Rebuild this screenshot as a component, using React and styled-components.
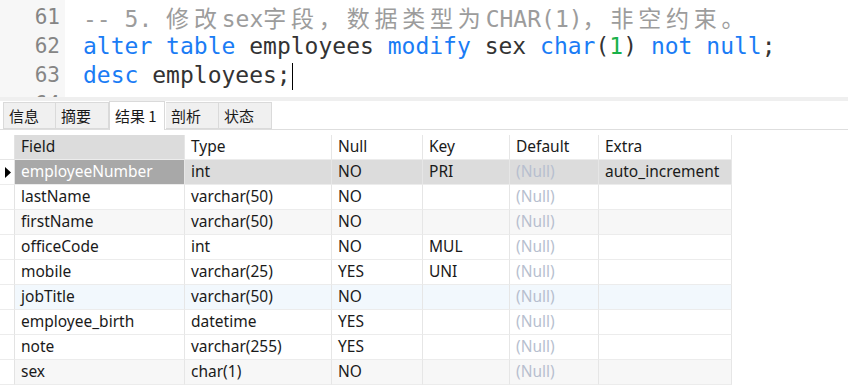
import React from "react";
import styled, { createGlobalStyle } from "styled-components";

const Global = createGlobalStyle`
  html, body { margin: 0; padding: 0; background: #ffffff; overflow: hidden; }
  #root { width: 848px; height: 385px; overflow: hidden; }
`;

const Page = styled.div`
  width: 848px;
  height: 385px;
  display: flex;
  flex-direction: column;
  background: #fff;
`;

/* ---------- Editor ---------- */
const Editor = styled.div`
  height: 97px;
  flex: none;
  display: grid;
  grid-template-columns: 65px 1fr;
  overflow: hidden;
`;

const Gutter = styled.div`
  background: #f7f7f7;
  padding-top: 3px;
  padding-right: 5px;
  text-align: right;
`;

const LineNo = styled.div`
  height: 29px;
  line-height: 29px;
  font-family: "DejaVu Sans Mono", "Liberation Mono", monospace;
  font-size: 21px;
  color: #858585;
`;

const CodeArea = styled.div`
  padding-top: 3px;
  padding-left: 18px;
`;

const CodeLine = styled.div`
  height: 29px;
  line-height: 29px;
  white-space: pre;
  font-family: "DejaVu Sans Mono", "Liberation Mono", "Noto Sans CJK SC", monospace;
  font-size: 23px;
  color: #333;
`;

const Tok = styled.span`
  color: ${(p) =>
    p.$k === "kw" ? "#1a7cf5" : p.$k === "cm" ? "#9c9c9c" : p.$k === "num" ? "#19b14a" : "#333333"};
`;

const Cjk = styled.span`
  font-family: "Noto Sans CJK SC", sans-serif;
  font-size: 23px;
  letter-spacing: 4.8px;
  color: #9c9c9c;
`;

const Caret = styled.span`
  display: inline-block;
  width: 1px;
  height: 27px;
  background: #000;
  vertical-align: middle;
  margin-left: 1px;
`;

/* ---------- Tabs ---------- */
const TabBar = styled.div`
  flex: none;
  height: 28px;
  border-top: 4px solid #efefef;
  border-bottom: 1px solid #dedede;
  display: flex;
  align-items: flex-end;
  padding-left: 3px;
  box-sizing: content-box;
`;

const Tab = styled.div`
  box-sizing: border-box;
  width: ${(p) => p.$w}px;
  height: ${(p) => (p.$active ? 29 : 27)}px;
  margin-bottom: ${(p) => (p.$active ? -1 : 0)}px;
  margin-right: ${(p) => (p.$gap ? 1 : 0)}px;
  background: ${(p) => (p.$active ? "#ffffff" : "#f0f0f0")};
  border: 1px solid #dadada;
  border-bottom: ${(p) => (p.$active ? "none" : "1px solid #dadada")};
  border-left: ${(p) => (p.$noLeft ? "none" : "1px solid #dadada")};
  padding-left: 5px;
  font-family: "Noto Sans CJK SC", "Noto Sans", sans-serif;
  font-size: 15px;
  line-height: ${(p) => (p.$active ? 27 : 25)}px;
  color: #1a1a1a;
  white-space: nowrap;
`;

/* ---------- Table ---------- */
const TableWrap = styled.div`
  margin-top: 5px;
  width: 732px;
`;

const Row = styled.div`
  display: grid;
  grid-template-columns: 15px 170px 147px 91px 87px 89px 133px;
  height: 25px;
  background: ${(p) => p.$bg || "#ffffff"};
`;

const Cell = styled.div`
  box-sizing: border-box;
  height: 25px;
  border-right: 1px solid #e6e6e6;
  border-bottom: 1px solid #ececec;
  padding-left: 6px;
  font-family: "Noto Sans", "Open Sans", sans-serif;
  font-size: 15.5px;
  line-height: 23px;
  white-space: nowrap;
  overflow: hidden;
  color: ${(p) => (p.$null ? "#b7bfcf" : p.$sel ? "#ffffff" : "#1a1a1a")};
  background: ${(p) => p.$bg || "transparent"};
`;

const Indicator = styled.div`
  box-sizing: border-box;
  height: 25px;
  border-right: 1px solid #e3e3e3;
  border-bottom: 1px solid #ececec;
  background: #fff;
  display: flex;
  align-items: center;
  padding-left: 5px;
`;

const HeadIndicator = styled(Indicator)`
  border-bottom: 1px solid #e6e6e6;
`;

const columns = ["Field", "Type", "Null", "Key", "Default", "Extra"];

const rows = [
  ["employeeNumber", "int", "NO", "PRI", null, "auto_increment"],
  ["lastName", "varchar(50)", "NO", "", null, ""],
  ["firstName", "varchar(50)", "NO", "", null, ""],
  ["officeCode", "int", "NO", "MUL", null, ""],
  ["mobile", "varchar(25)", "YES", "UNI", null, ""],
  ["jobTitle", "varchar(50)", "NO", "", null, ""],
  ["employee_birth", "datetime", "YES", "", null, ""],
  ["note", "varchar(255)", "YES", "", null, ""],
  ["sex", "char(1)", "NO", "", null, ""],
];

const rowBg = ["#dcdcdc", "#ffffff", "#f7f7f7", "#ffffff", "#ffffff", "#f2f8fd", "#ffffff", "#ffffff", "#f7f7f7"];

const Arrow = () => (
  <svg width="6" height="11" viewBox="0 0 6 11">
    <path d="M0 0 L6 5.5 L0 11 Z" fill="#000" />
  </svg>
);

export default function App() {
  return (
    <Page>
      <Global />
      <Editor>
        <Gutter>
          <LineNo>61</LineNo>
          <LineNo>62</LineNo>
          <LineNo>63</LineNo>
          <LineNo>64</LineNo>
        </Gutter>
        <CodeArea>
          <CodeLine>
            <Tok $k="cm">-- 5. </Tok>
            <Cjk>修改</Cjk>
            <Tok $k="cm">sex</Tok>
            <Cjk>字段，数据类型为</Cjk>
            <Tok $k="cm">CHAR(1)</Tok>
            <Cjk>，非空约束。</Cjk>
          </CodeLine>
          <CodeLine>
            <Tok $k="kw">alter</Tok> <Tok $k="kw">table</Tok> <Tok>employees</Tok>{" "}
            <Tok $k="kw">modify</Tok> <Tok>sex</Tok> <Tok $k="kw">char</Tok>
            <Tok>(</Tok>
            <Tok $k="num">1</Tok>
            <Tok>)</Tok> <Tok $k="kw">not</Tok> <Tok $k="kw">null</Tok>
            <Tok>;</Tok>
          </CodeLine>
          <CodeLine>
            <Tok $k="kw">desc</Tok> <Tok>employees;</Tok>
            <Caret />
          </CodeLine>
          <CodeLine />
        </CodeArea>
      </Editor>

      <TabBar>
        <Tab $w={53}>信息</Tab>
        <Tab $w={53} $noLeft>摘要</Tab>
        <Tab $w={56} $active $gap>结果 1</Tab>
        <Tab $w={53} $noLeft>剖析</Tab>
        <Tab $w={53} $noLeft>状态</Tab>
      </TabBar>

      <TableWrap>
        <Row>
          <HeadIndicator />
          {columns.map((c, i) => (
            <Cell key={c} $bg={i === 0 ? "#dcdcdc" : undefined}>
              {c}
            </Cell>
          ))}
        </Row>
        {rows.map((r, ri) => (
          <Row key={ri} $bg={rowBg[ri]}>
            <Indicator>{ri === 0 ? <Arrow /> : null}</Indicator>
            {r.map((v, ci) => (
              <Cell
                key={ci}
                $null={v === null}
                $sel={ri === 0 && ci === 0}
                $bg={ri === 0 && ci === 0 ? "#a8a8a8" : undefined}
              >
                {v === null ? "(Null)" : v}
              </Cell>
            ))}
          </Row>
        ))}
      </TableWrap>
    </Page>
  );
}
